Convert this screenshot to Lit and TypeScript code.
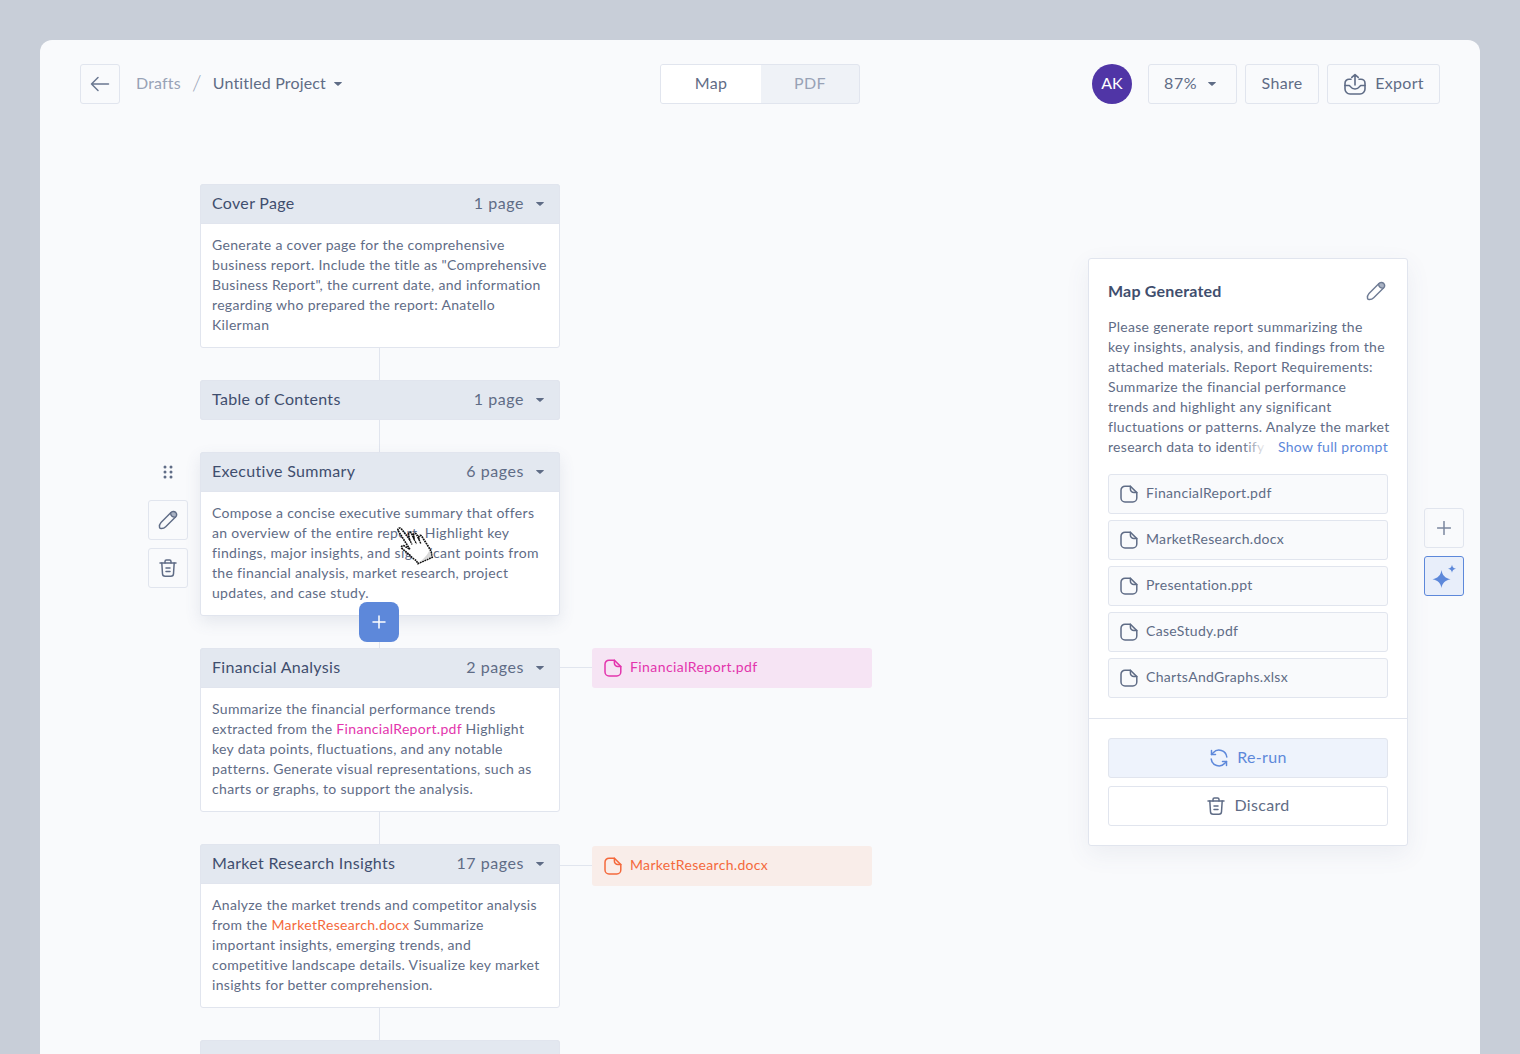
import { LitElement, html, css, svg } from "lit";
import { customElement } from "lit/decorators.js";
import { classMap } from "lit/directives/class-map.js";

const doc = () => html`<svg class="ic" width="20" height="20" viewBox="0 0 20 20" fill="none" stroke="currentColor" stroke-width="1.5" stroke-linecap="round" stroke-linejoin="round"><path d="M6 2.200h5.400L17.800 8.600V14a4 4 0 0 1-4 4H6a4 4 0 0 1-4-4V6.200a4 4 0 0 1 4-4z"/><path d="M11.400 2.200v2.800a3.500 3.500 0 0 0 3.500 3.600h2.900"/></svg>`;
const pencil = () => html`<svg class="ic" width="20" height="20" viewBox="0 0 20 20" fill="none" stroke="currentColor" stroke-width="1.4" stroke-linecap="round" stroke-linejoin="round"><path d="M12.700 2.800 L3 12.500 C1.800 13.800 1.300 16 1.500 17.400 C1.600 18.300 2 18.500 2.900 18.500 C4.500 18.600 6.500 18 7.700 16.800 L17.500 7"/><path d="M12.700 2.800a3.500 3.500 0 0 1 5-.4 3.400 3.400 0 0 1-.2 4.600 3.800 3.800 0 0 1-4.800-4.200z" fill="#a9b2c3"/></svg>`;
const trash = () => html`<svg class="ic" width="20" height="20" viewBox="0 0 20 20" fill="none" stroke="currentColor" stroke-width="1.5" stroke-linecap="round" stroke-linejoin="round"><path d="M2 5h16"/><path d="M7 5V3.400A1.400 1.400 0 0 1 8.400 2h3.200A1.400 1.400 0 0 1 13 3.400V5"/><path d="M3.800 5l.7 10.800A2.600 2.600 0 0 0 7.100 18.300h5.800a2.600 2.600 0 0 0 2.600-2.500L16.200 5"/><path d="M8 10h4M8 13.400h4"/></svg>`;
const caret = () => html`<svg class="caret" width="8" height="4" viewBox="0 0 8 4"><path d="M.6 0h6.800a.4.4 0 0 1 .3.700L4.300 3.800a.5.5 0 0 1-.6 0L.3.700A.4.4 0 0 1 .6 0z" fill="currentColor"/></svg>`;

const cursor = svg`<path d="M3 6.500 C2.200 4.500 5 3 6.300 4.800 L14.300 15 L13.600 9.800 C13.400 8.400 15.600 7.800 16.400 9.100 L19 15.200 L18.600 10.600 C18.600 9.200 20.800 8.800 21.500 10.100 L24 15.600 L24 12.400 C24 11 26 11 26.700 12.200 L33 22 C35.500 26 37 29.500 36.600 31 L37.200 33.200 L23 39.600 L21.500 37 C20 35.600 17.500 34.400 15.300 31.500 L7 24.500 C5.600 23 7.200 21 9 21.800 L14.800 25.200 Z" fill="#fff" stroke="#111" stroke-width="1.700" stroke-dasharray="1.800 .7"/><path d="M14.300 15 L17 20.500 M19 15.200 L21.500 20 M24 15.600 L25.800 19.600" stroke="#111" stroke-width="1.400" stroke-dasharray="1.800 .7" fill="none"/><path d="M24 38.500 L36.500 32.500 L34.500 26 C33 30 30 34 24 38.500Z" fill="#d8d8d8"/>`;

interface Sec { title: string; pages: string; body?: unknown; tag?: { name: string; kind: string }; active?: boolean; }

const SECTIONS: Sec[] = [
  { title: "Cover Page", pages: "1 page", body: html`Generate a cover page for the comprehensive<br>business report. Include the title as "Comprehensive<br>Business Report", the current date, and information<br>regarding who prepared the report: Anatello<br>Kilerman` },
  { title: "Table of Contents", pages: "1 page" },
  { title: "Executive Summary", pages: "6 pages", active: true, body: html`Compose a concise executive summary that offers<br>an overview of the entire report. Highlight key<br>findings, major insights, and significant points from<br>the financial analysis, market research, project<br>updates, and case study.` },
  { title: "Financial Analysis", pages: "2 pages", tag: { name: "FinancialReport.pdf", kind: "pink" }, body: html`Summarize the financial performance trends<br>extracted from the <span class="pink">FinancialReport.pdf</span> Highlight<br>key data points, fluctuations, and any notable<br>patterns. Generate visual representations, such as<br>charts or graphs, to support the analysis.` },
  { title: "Market Research Insights", pages: "17 pages", tag: { name: "MarketResearch.docx", kind: "orange" }, body: html`Analyze the market trends and competitor analysis<br>from the <span class="orange">MarketResearch.docx</span> Summarize<br>important insights, emerging trends, and<br>competitive landscape details. Visualize key market<br>insights for better comprehension.` },
  { title: "Project Updates", pages: "1 page" },
];

const FILES = ["FinancialReport.pdf", "MarketResearch.docx", "Presentation.ppt", "CaseStudy.pdf", "ChartsAndGraphs.xlsx"];

@customElement("app-root")
export class AppRoot extends LitElement {
  static styles = css`
    :host { display: block; height: 1054px; overflow: hidden; background: #c8ced8; padding-top: 40px; box-sizing: border-box;
      font-family: Lato, "Noto Sans", sans-serif; font-size: 14px; line-height: 20px; color: #5f6c86; letter-spacing: .32px; }
    * { box-sizing: border-box; }
    .t { margin-top: -2px; }
    .frame { margin: 0 40px; height: 1100px; background: #f9fafc; border-radius: 12px; padding: 24px 16px 0 40px; }
    .top { display: grid; grid-template-columns: 1fr 200px 1fr; align-items: center; height: 40px; padding-right: 24px; margin-bottom: 80px; }
    .crumbs { display: flex; align-items: center; font-size: 16px; letter-spacing: .16px; }
    .btn { display: inline-flex; align-items: center; justify-content: center; height: 40px; border: 1px solid #e1e5ee; border-radius: 3px; color: #5f6c86; font-size: 16px; background: transparent; flex: none; }
    .back { width: 40px; margin-right: 16px; }
    .drafts { color: #98a2b6; }
    .sep { color: #98a2b6; width: 32px; text-align: center; font-size: 22px; font-weight: 300; }
    .proj { color: #5f6c86; }
    .crumbs .caret { margin-left: 8px; color: #5f6c86; }
    .seg { display: flex; height: 40px; border: 1px solid #e1e5ee; border-radius: 3px; overflow: hidden; background: #eff2f7; font-size: 16px; }
    .seg div { flex: 1; display: flex; align-items: center; justify-content: center; color: #98a2b6; }
    .seg .on { flex: none; width: 100px; background: #fff; color: #5f6c86; }
    .acts { display: flex; justify-content: flex-end; align-items: center; gap: 8px; }
    .avatar { width: 40px; height: 40px; border-radius: 50%; background: #5035a6; color: #fff; display: flex; align-items: center; justify-content: center; font-size: 16px; margin-right: 8px; letter-spacing: 0; }
    .zoom { width: 89px; gap: 11px; justify-content: flex-start; padding-left: 15px; letter-spacing: .6px; } .share { width: 74px; } .export { width: 113px; gap: 8px; }
    .canvas { display: flex; justify-content: space-between; align-items: flex-start; padding-left: 120px; }
    .map { display: flex; flex-direction: column; }
    .row { display: flex; align-items: flex-start; position: relative; }
    .card { width: 360px; border: 1px solid #e1e5ee; border-radius: 3px; background: #fff; position: relative; }
    .card.nobody { height: 40px; background: #e3e8f0; }
    .head { background: #e3e8f0; display: flex; align-items: center; font-size: 16px; color: #3f4e6e; margin: -1px -1px 0; padding: 0 12px 0 11px; height: 40px; border: 1px solid #e1e5ee; border-radius: 3px 3px 0 0; }
    .card.nobody .head { border-radius: 3px; }
    .card.active { box-shadow: 0 6px 16px rgba(80,95,130,.12); }
    .head .title { flex: 1; }
    .head .pages { color: #5f6c86; margin-right: 12px; letter-spacing: .55px; }
    .head .caret { margin-right: 3px; color: #5f6c86; }
    .body { padding: 11px 11px 12px; white-space: nowrap; }
    .pink { color: #e335ad; } .orange { color: #f4693c; }
    .link { width: 1px; height: 32px; background: #e1e5ee; margin-left: 179px; }
    .hline { width: 32px; height: 1px; background: #e1e5ee; margin-top: 19px; flex: none; }
    .hline.orange { margin-top: 21px; }
    .tag { width: 280px; height: 40px; border-radius: 3px; display: flex; align-items: center; gap: 7px; padding: 0 11px; }
    .tag.pink { background: #f6e4f4; letter-spacing: .42px; } .tag.orange { background: #f9ede9; margin-top: 2px; }
    .tools { position: absolute; left: -52px; top: 0; width: 40px; display: flex; flex-direction: column; align-items: center; }
    .grip { height: 40px; display: flex; align-items: center; color: #5f6c86; margin-bottom: 8px; }
    .tools .btn { width: 40px; margin-bottom: 8px; }
    .plus { position: absolute; left: 158px; bottom: -27px; width: 40px; height: 40px; border-radius: 8px; background: #5d88da; color: #fff; display: flex; align-items: center; justify-content: center; z-index: 2; }
    .cursor { position: absolute; left: 194px; top: 71px; z-index: 3; }
    .right { display: flex; align-items: center; gap: 16px; margin-top: 74px; }
    .panel { width: 320px; height: 588px; background: #fff; border: 1px solid #e1e5ee; border-radius: 3px; box-shadow: 0 8px 24px rgba(80,95,130,.08); padding: 19px; display: flex; flex-direction: column; }
    .ptitle { display: flex; justify-content: space-between; align-items: center; height: 26px; font-size: 16px; font-weight: 700; color: #3f4e6e; margin-bottom: 13px; letter-spacing: .2px; flex: none; }
    .ptitle .ic { color: #6e7b94; margin-right: 2px; }
    .ptext { position: relative; white-space: nowrap; height: 140px; margin-bottom: 17px; letter-spacing: .3px; flex: none; }
    .fade { position: absolute; right: 110px; bottom: 0; width: 36px; height: 20px; background: linear-gradient(90deg, rgba(255,255,255,0), #fff 70%); }
    .more { position: absolute; right: 0; bottom: 0; color: #5d88da; }
    .files { display: flex; flex-direction: column; gap: 6px; flex: none; }
    .file { height: 40px; border: 1px solid #e1e5ee; border-radius: 3px; background: #f9fafc; display: flex; align-items: center; gap: 7px; padding: 0 10px; }
    .file .ic { color: #5f6c86; }
    .divider { height: 1px; background: #e1e5ee; margin: 20px -19px 19px; flex: none; }
    .wide { width: 100%; gap: 8px; margin-bottom: 8px; }
    .rerun { background: #eef3fc; color: #5d88da; }
    .discard { background: #fff; margin-bottom: 0; }
    .side { display: flex; flex-direction: column; gap: 8px; }
    .side .btn { width: 40px; }
    .spark { background: #e8eefa; border-color: #5d88da; color: #5d88da; }
  `;

  renderCard(s: Sec, i: number) {
    return html`
      <div class="row">
        <div class=${classMap({ card: true, active: !!s.active, nobody: !s.body })}>
          <div class="head"><span class="title t">${s.title}</span><span class="pages t">${s.pages}</span>${caret()}</div>
          ${s.body ? html`<div class="body">${s.body}</div>` : null}
          ${s.active ? html`
            <div class="plus"><svg width="14" height="14" viewBox="0 0 14 14" stroke="currentColor" stroke-width="1.5" stroke-linecap="round"><path d="M7 1v12M1 7h12"/></svg></div>
            <svg class="cursor" width="40" height="42" viewBox="0 0 40 42">${cursor}</svg>` : null}
        </div>
        ${s.active ? html`<div class="tools">
          <div class="grip"><svg width="10" height="14" viewBox="0 0 10 14" fill="currentColor"><circle cx="2" cy="2" r="1.500"/><circle cx="8" cy="2" r="1.500"/><circle cx="2" cy="7" r="1.500"/><circle cx="8" cy="7" r="1.500"/><circle cx="2" cy="12" r="1.500"/><circle cx="8" cy="12" r="1.500"/></svg></div>
          <div class="btn">${pencil()}</div>
          <div class="btn">${trash()}</div>
        </div>` : null}
        ${s.tag ? html`<div class="hline ${s.tag.kind}"></div><div class="tag ${s.tag.kind}"><span class=${s.tag.kind} style="display:flex">${doc()}</span><span class="t ${s.tag.kind}">${s.tag.name}</span></div>` : null}
      </div>
      ${i < SECTIONS.length - 1 ? html`<div class="link"></div>` : null}`;
  }

  render() {
    return html`<div class="frame">
      <div class="top">
        <div class="crumbs">
          <div class="btn back"><svg width="20" height="20" viewBox="0 0 20 20" fill="none" stroke="#6a7790" stroke-width="1.500" stroke-linecap="round" stroke-linejoin="round"><path d="M18.500 10H1.500M8 3.500 1.500 10 8 16.500"/></svg></div>
          <span class="drafts t">Drafts</span><span class="sep t">/</span><span class="proj t">Untitled Project</span>${caret()}
        </div>
        <div class="seg"><div class="on"><span class="t">Map</span></div><div><span class="t">PDF</span></div></div>
        <div class="acts">
          <div class="avatar"><span class="t">AK</span></div>
          <div class="btn zoom"><span class="t">87%</span>${caret()}</div>
          <div class="btn share"><span class="t">Share</span></div>
          <div class="btn export"><svg width="24" height="24" viewBox="0 0 24 24" fill="none" stroke="currentColor" stroke-width="1.600" stroke-linecap="round" stroke-linejoin="round"><path d="M12 13V2.500M8.800 5.400 12 2.500l3.200 2.900"/><path d="M8 7.200H6a4 4 0 0 0-4 4V17a5 5 0 0 0 5 5h10a5 5 0 0 0 5-5v-5.800a4 4 0 0 0-4-4h-2"/><path d="M2 13.500h4.200c1 0 1.500 3.500 5.800 3.500s4.800-3.500 5.800-3.500H22"/></svg><span class="t">Export</span></div>
        </div>
      </div>
      <div class="canvas">
        <div class="map">${SECTIONS.map((s, i) => this.renderCard(s, i))}</div>
        <div class="right">
          <div class="panel">
            <div class="ptitle"><span>Map Generated</span>${pencil()}</div>
            <div class="ptext">Please generate report summarizing the<br>key insights, analysis, and findings from the<br>attached materials. Report Requirements:<br>Summarize the financial performance<br>trends and highlight any significant<br>fluctuations or patterns. Analyze the market<br>research data to identify<div class="fade"></div><div class="more">Show full prompt</div></div>
            <div class="files">${FILES.map((f) => html`<div class="file">${doc()}<span class="t">${f}</span></div>`)}</div>
            <div class="divider"></div>
            <div class="btn wide rerun"><svg width="20" height="20" viewBox="0 0 20 20" fill="none" stroke="currentColor" stroke-width="1.500" stroke-linecap="round" stroke-linejoin="round"><path d="M17.800 9A7.800 7.800 0 0 0 4.200 4.800L2.500 6.500"/><path d="M2.500 2.500v4h4"/><path d="M2.200 11a7.800 7.800 0 0 0 13.600 4.200l1.700-1.700"/><path d="M17.500 17.500v-4h-4"/></svg><span class="t">Re-run</span></div>
            <div class="btn wide discard">${trash()}<span class="t">Discard</span></div>
          </div>
          <div class="side">
            <div class="btn"><svg width="14" height="14" viewBox="0 0 14 14" stroke="#7b879e" stroke-width="1.500" stroke-linecap="round"><path d="M7 .5v13M.5 7h13"/></svg></div>
            <div class="btn spark"><svg width="24" height="24" viewBox="0 0 24 24" fill="currentColor"><path d="M9.500 6c.8 5.200 3.400 8 9 9.200-5.600 1.200-8.200 3.800-9 8.800-.8-5-3.400-7.600-9-8.800 5.600-1.200 8.200-4 9-9.200z"/><path d="M20 .8c.4 2.500 1.400 3.600 4 4-2.600.4-3.600 1.500-4 4-.4-2.500-1.400-3.600-4-4 2.600-.4 3.600-1.500 4-4z"/></svg></div>
          </div>
        </div>
      </div>
    </div>`;
  }
}
